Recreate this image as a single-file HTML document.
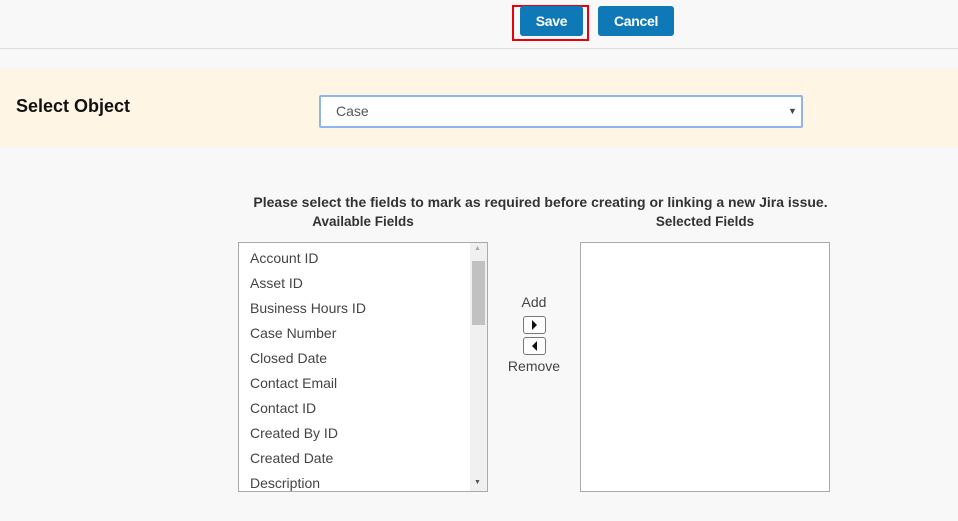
<!DOCTYPE html>
<html><head><style>
body{margin:0;width:958px;height:521px;background:#f8f8f8;font-family:"Liberation Sans",sans-serif;position:relative;overflow:hidden}
.a{position:absolute}
.btn{position:absolute;background:#0f79b8;color:#fff;border-radius:3px;font-weight:bold;font-size:14px;text-align:center;line-height:30px;letter-spacing:-0.3px}
.item{position:absolute;left:11px;font-size:14px;color:#444}
.arr{position:absolute;left:523px;width:21px;height:16px;border:1px solid #777;border-radius:3px;background:#fdfdfd}
</style></head><body>
<div class="a" style="left:0;top:48px;width:958px;height:1px;background:#ddd"></div>
<div class="a" style="left:512px;top:5px;width:73px;height:32px;border:2px solid #e8000d"></div>
<div class="btn" style="left:520px;top:6px;width:63px;height:30px">Save</div>
<div class="btn" style="left:598px;top:6px;width:76px;height:30px">Cancel</div>
<div class="a" style="left:0;top:69px;width:958px;height:78px;background:#fef5e4"></div>
<div class="a" style="left:16px;top:96px;font-size:18px;font-weight:bold;color:#111">Select Object</div>
<div class="a" style="left:319px;top:95px;width:480px;height:29px;border:2px solid #8fb5ee;border-radius:2px;background:#fff"></div>
<div class="a" style="left:336px;top:103px;font-size:14px;color:#555">Case</div>
<div class="a" style="left:788px;top:106px;font-size:9px;color:#444">▼</div>
<div class="a" style="left:0;top:194px;width:1081px;text-align:center;font-size:14px;font-weight:bold;color:#333">Please select the fields to mark as required before creating or linking a new Jira issue.</div>
<div class="a" style="left:238px;top:214px;width:250px;text-align:center;font-size:13.5px;font-weight:bold;color:#333">Available Fields</div>
<div class="a" style="left:580px;top:214px;width:250px;text-align:center;font-size:13.5px;font-weight:bold;color:#333">Selected Fields</div>
<div class="a" style="left:238px;top:242px;width:248px;height:248px;border:1px solid #aaa;background:#fff;overflow:hidden">
<div class="item" style="top:7px">Account ID</div>
<div class="item" style="top:32px">Asset ID</div>
<div class="item" style="top:57px">Business Hours ID</div>
<div class="item" style="top:82px">Case Number</div>
<div class="item" style="top:107px">Closed Date</div>
<div class="item" style="top:132px">Contact Email</div>
<div class="item" style="top:157px">Contact ID</div>
<div class="item" style="top:182px">Created By ID</div>
<div class="item" style="top:207px">Created Date</div>
<div class="item" style="top:232px">Description</div>
<div class="a" style="left:231px;top:0;width:17px;height:248px;background:#f0f0f0"></div>
<div class="a" style="left:233px;top:18px;width:13px;height:64px;background:#c1c1c1"></div>
<div class="a" style="left:235px;top:2px;font-size:7px;color:#aaa">▲</div>
<div class="a" style="left:235px;top:236px;font-size:7px;color:#555">▼</div>
</div>
<div class="a" style="left:580px;top:242px;width:248px;height:248px;border:1px solid #aaa;background:#fff"></div>
<div class="a" style="left:509px;top:294px;width:50px;text-align:center;font-size:14px;color:#444">Add</div>
<div class="arr" style="top:316px"><div class="a" style="left:8px;top:3px;width:0;height:0;border-left:5px solid #111;border-top:5px solid transparent;border-bottom:5px solid transparent"></div></div>
<div class="arr" style="top:337px"><div class="a" style="left:8px;top:3px;width:0;height:0;border-right:5px solid #111;border-top:5px solid transparent;border-bottom:5px solid transparent"></div></div>
<div class="a" style="left:504px;top:358px;width:60px;text-align:center;font-size:14px;color:#444">Remove</div>
</body></html>
